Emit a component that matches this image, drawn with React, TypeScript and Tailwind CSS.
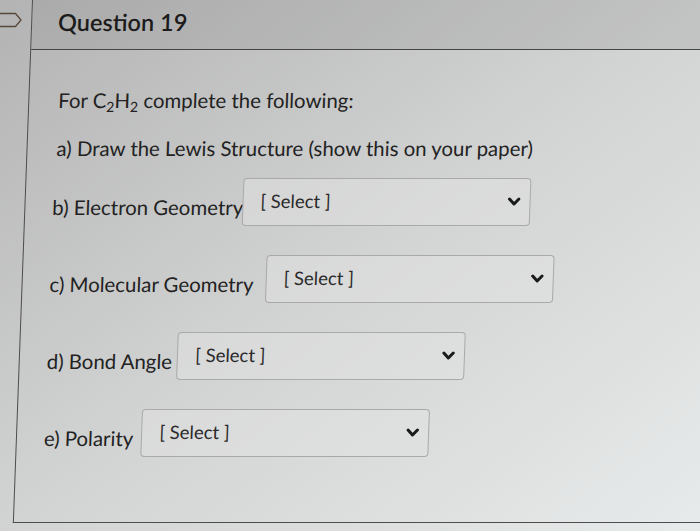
import React from "react";

const rows = [
  { label: "b) Electron Geometry", gap: "-ml-[1px]" },
  { label: "c) Molecular Geometry", gap: "ml-[12px]" },
  { label: "d) Bond Angle", gap: "ml-[5px]" },
  { label: "e) Polarity", gap: "ml-[8px]" },
];

const Chevron = () => (
  <svg width="13" height="10" viewBox="0 0 13 10" className="shrink-0">
    <path
      d="M1.8 2 L6.5 7 L11.2 2"
      fill="none"
      stroke="#1a1a1a"
      strokeWidth="3"
      strokeLinecap="round"
      strokeLinejoin="round"
    />
  </svg>
);

const SelectBox: React.FC<{ className?: string }> = ({ className }) => (
  <div
    className={
      "flex h-[48px] w-[288px] shrink-0 items-center justify-between rounded-[4px] border border-[#a9a9a9] bg-[#e2e2e2]/50 pl-[17px] pr-[9px] " +
      (className ?? "")
    }
  >
    <span className="-mt-[3px] text-[18.5px] text-[#2a2a2a]">[ Select ]</span>
    <span className="-mt-[1px]">
      <Chevron />
    </span>
  </div>
);

export default function App() {
  return (
    <div
      className="relative h-[531px] w-[700px] overflow-hidden bg-linear-to-br from-[#b3b3b3] via-[#d2d3d3] to-[#e8ebeb] text-[#222]"
      style={{ fontFamily: "Lato, 'Open Sans', sans-serif" }}
    >
      {/* bookmark tag in the left gutter */}
      <svg
        width="24"
        height="16"
        viewBox="0 0 24 16"
        className="absolute left-0 top-[12px]"
      >
        <path
          d="M-2 1.5 H15.5 L21 8 L15.5 14.5 H-2"
          fill="none"
          stroke="#55483c"
          strokeWidth="1.3"
        />
      </svg>

      <div className="ml-[32px] flex h-[523px] w-[720px] origin-top-left skew-x-[-2.1deg] flex-col border-b border-l border-[#4d4d4d]">
        {/* header */}
        <div className="flex h-[50px] shrink-0 items-start border-b border-[#454545] bg-[#8e8e8e]/25 pl-[26px] pt-[7px]">
          <h2 className="text-[23.5px] font-semibold leading-[30px] text-[#1c1c1c]">
            Question 19
          </h2>
        </div>

        {/* body */}
        <div className="flex flex-col pl-[27px] text-[20.4px] leading-[24px]">
          <p className="mt-[38px] ml-[2px]">
            For C<sub className="text-[14px]">2</sub>H
            <sub className="text-[14px]">2</sub> complete the following:
          </p>
          <p className="mt-[24px] ml-[2px]">
            a) Draw the Lewis Structure (show this on your paper)
          </p>

          <div className="mt-[18px] flex flex-col gap-[29px]">
            {rows.map((r) => (
              <div key={r.label} className="flex items-center">
                <span className="pt-[9px] whitespace-nowrap">{r.label}</span>
                <SelectBox className={r.gap} />
              </div>
            ))}
          </div>
        </div>
      </div>
    </div>
  );
}
